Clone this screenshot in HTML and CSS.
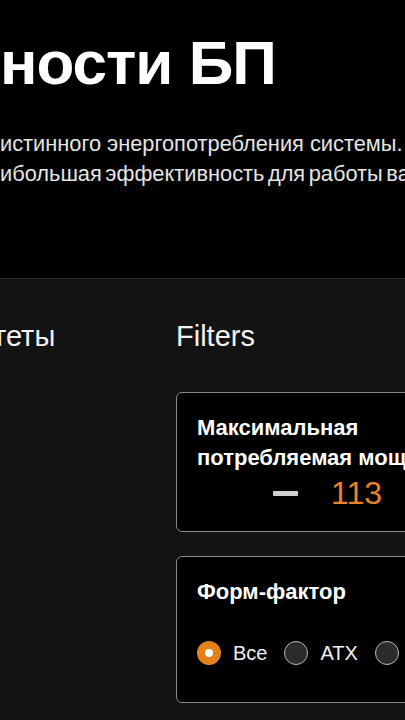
FILE: index.html
```html
<!DOCTYPE html>
<html lang="ru">

<head>
  <meta charset="UTF-8" />
  <meta name="viewport" content="width=device-width, initial-scale=1" />
  <title>Калькулятор мощности БП</title>
  <link rel="stylesheet" href="styles.css">
</head>

<body>
  <div class="page">

    <!-- Шапка -->
    <header class="hero">
      <h1>ности БП</h1>
      <p>
        <span class="line">истинного энергопотребления системы.</span>
        <span class="line line-tight">ибольшая эффективность для работы ва</span>
      </p>
    </header>

    <!-- Основная часть -->
    <main class="main">
      <div class="side">
        <h2>теты</h2>
      </div>

      <div class="filters">
        <h2>Filters</h2>

        <div class="card">
          <h3>Максимальная<br>потребляемая мощность</h3>
          <div class="value-row">
            <span class="dash"></span>
            <span class="value">113</span>
          </div>
        </div>

        <div class="card card-form">
          <h3>Форм-фактор</h3>
          <div class="radios">
            <label class="radio active"><span class="dot"></span>Все</label>
            <label class="radio"><span class="dot"></span>ATX</label>
            <label class="radio"><span class="dot"></span>SFX</label>
          </div>
        </div>
      </div>
    </main>

  </div>
</body>

</html>
```

FILE: styles.css
```css
* {
  box-sizing: border-box;
  font-family: 'Liberation Sans', Arial, sans-serif;
}

body {
  margin: 0;
  background-color: #000;
  color: #fff;
}

.page {
  width: 405px;
  overflow: hidden;
}

.hero {
  height: 278px;
  padding-top: 32px;
  background-color: #000;
}

.hero h1 {
  margin: 0;
  font-size: 62px;
  line-height: 62px;
  font-weight: 700;
  letter-spacing: -1px;
  white-space: nowrap;
}

.hero p {
  margin: 35px 0 0;
  font-size: 21.8px;
  line-height: 30px;
  color: #e4e4e4;
  white-space: nowrap;
}

.hero .line {
  display: block;
}

.hero .line-tight {
  word-spacing: -2.5px;
}

.main {
  display: flex;
  min-height: 442px;
  padding-top: 39px;
  background-color: #131313;
  border-top: 1px solid #2c2c2c;
}

.side {
  width: 176px;
  flex-shrink: 0;
}

.side h2 {
  text-indent: -7px;
}

h2 {
  margin: 0;
  font-size: 29px;
  line-height: 36px;
  font-weight: 400;
  color: #f2f2f2;
}

.filters {
  flex-shrink: 0;
  width: 300px;
}

.filters h2 {
  margin-bottom: 38px;
}

.card {
  background-color: #000;
  border: 1px solid #8a8a8a;
  border-radius: 6px;
  padding: 20px 20px 20px;
  margin-bottom: 24px;
}

.card h3 {
  margin: 0;
  font-size: 22px;
  line-height: 30px;
  font-weight: 700;
  white-space: nowrap;
}

.value-row {
  display: flex;
  align-items: center;
  gap: 33px;
  height: 36px;
  margin-top: 2px;
  padding-left: 76px;
}

.dash {
  width: 25px;
  height: 5px;
  border-radius: 1px;
  background-color: #d0d0d0;
}

.value {
  font-size: 32px;
  color: #e8822e;
}

.card-form {
  padding-bottom: 37px;
}

.radios {
  display: flex;
  gap: 17px;
  margin-top: 34px;
}

.radio {
  display: flex;
  align-items: center;
  gap: 12px;
  font-size: 20px;
  line-height: 24px;
  color: #f0f0f0;
  white-space: nowrap;
}

.dot {
  width: 24px;
  height: 24px;
  border-radius: 50%;
  background-color: #2b2b2b;
  border: 1.5px solid #b8b8b8;
}

.radio.active .dot {
  border: 8px solid #e3821d;
  background-color: #fff;
}
```
